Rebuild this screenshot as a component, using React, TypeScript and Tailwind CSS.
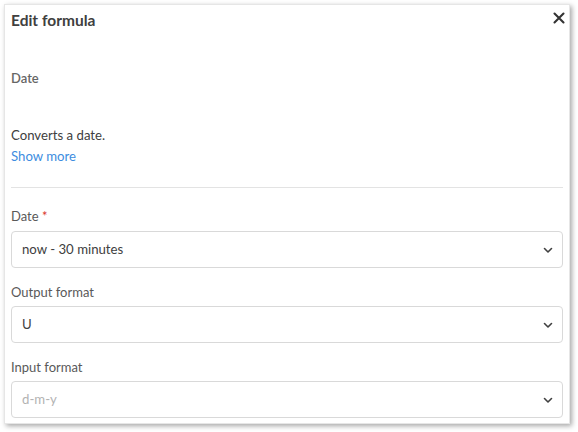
import React from 'react';

const font = { fontFamily: 'Lato, "Open Sans", sans-serif' };

function Chevron() {
  return (
    <svg width="10" height="10" viewBox="0 0 10 10" className="text-[#404040]">
      <path d="M1.5 3.5 L5 7 L8.5 3.5" fill="none" stroke="currentColor" strokeWidth="1.6" strokeLinecap="round" strokeLinejoin="round" />
    </svg>
  );
}

function SelectBox({ value, placeholder }: { value: string; placeholder?: boolean }) {
  return (
    <div className="h-[37px] flex items-center justify-between rounded-[4px] border border-[#d9d9d9] pl-[10px] pr-[9px]">
      <span className={placeholder ? 'text-[13.2px] text-[#b3b3b3]' : 'text-[13.2px] text-[#404040]'}>{value}</span>
      <Chevron />
    </div>
  );
}

export default function App() {
  return (
    <div className="w-[578px] h-[432px] bg-white pt-[4px] pl-[4px]" style={font}>
      <div className="relative w-[566px] h-[420px] bg-white border border-[#e6e6e6] shadow-[2px_2px_5px_rgba(0,0,0,0.35)] px-[6px]">
        {/* header */}
        <div className="pt-[5px] h-[30px]">
          <h1 className="text-[15.5px] leading-[20px] font-bold text-[#404040]">Edit formula</h1>
        </div>
        <button className="absolute right-[4px] top-[7px] text-[#333]" aria-label="Close">
          <svg width="12" height="12" viewBox="0 0 12 12">
            <path d="M1.5 1.5 L10.5 10.5 M10.5 1.5 L1.5 10.5" stroke="currentColor" strokeWidth="2.1" strokeLinecap="round" />
          </svg>
        </button>

        <div className="mt-[35px] text-[13px] leading-[16px] font-semibold text-[#666]">Date</div>

        <div className="mt-[39px] text-[13.2px] leading-[21px] text-[#404040]">Converts a date.</div>
        <div className="text-[13.2px] leading-[21px] text-[#3d8de0]">Show more</div>

        <div className="mt-[20px] border-t border-[#e3e3e3]" />

        <div className="mt-[20px] text-[13px] leading-[16px] text-[#595959]">
          Date <span className="text-[#d9342b]">*</span>
        </div>
        <div className="mt-[7px]">
          <SelectBox value="now - 30 minutes" />
        </div>

        <div className="mt-[16px] text-[13px] leading-[16px] text-[#595959]">Output format</div>
        <div className="mt-[6px]">
          <SelectBox value="U" />
        </div>

        <div className="mt-[16px] text-[13px] leading-[16px] text-[#595959]">Input format</div>
        <div className="mt-[6px]">
          <SelectBox value="d-m-y" placeholder />
        </div>
      </div>
    </div>
  );
}
